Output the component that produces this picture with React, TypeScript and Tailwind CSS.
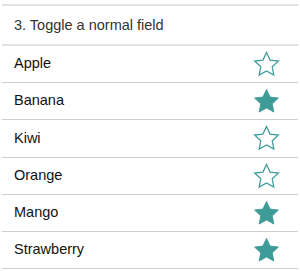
import React, { useState } from 'react';

const Star = ({ filled }: { filled: boolean }) => (
    <svg width="27" height="26" viewBox="0 0 24 23" className="block">
        <path
            d="M12 1.2l3.2 6.8 7.4.9-5.5 5.1 1.4 7.3L12 17.7l-6.5 3.6 1.4-7.3L1.4 8.9l7.4-.9z"
            fill={filled ? '#3d9b98' : 'none'}
            stroke="#3d9b98"
            strokeWidth={filled ? 0.8 : 1.1}
            strokeLinejoin="miter"
        />
    </svg>
)

const App: React.FC = () => {
    const [fruits, setFruits] = useState([
        { name: 'Apple', fav: false },
        { name: 'Banana', fav: true },
        { name: 'Kiwi', fav: false },
        { name: 'Orange', fav: false },
        { name: 'Mango', fav: true },
        { name: 'Strawberry', fav: true },
    ])

    const toggle = (i: number) => {
        setFruits(fruits.map((f, idx) => (idx === i ? { ...f, fav: !f.fav } : f)))
    }

    return (
        <div className="w-[300px] h-[271px] bg-white pt-[4px] px-[2px]" style={{ fontFamily: '"Liberation Sans", Arial, sans-serif' }}>
            <div className="border-t-2 border-[#e3e3e3]">
                <div className="h-[40px] flex items-center pt-[2px] pl-[12px] text-[14.5px] text-[#333] border-b-2 border-[#e3e3e3]">3. Toggle a normal field</div>
                {fruits.map((f, i) => (
                    <div key={f.name} className="h-[37.2px] flex items-center justify-between pl-[12px] pr-[18px] border-b border-[#cfcfcf] text-[14.5px] text-[#111]">
                        <span>{f.name}</span>
                        <button type="button" onClick={() => toggle(i)}><Star filled={f.fav} /></button>
                    </div>
                ))}
            </div>
        </div>
    );
};

export default App;
